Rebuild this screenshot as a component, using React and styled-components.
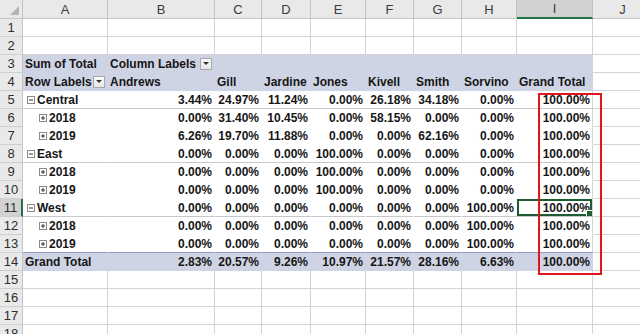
import React from 'react';
import styled, { createGlobalStyle } from 'styled-components';

const GlobalStyle = createGlobalStyle`
  body {
    margin: 0;
    overflow: hidden;
    background: #fff;
    font-family: "Liberation Sans", Arial, sans-serif;
  }
`;

const Sheet = styled.div`
  position: relative;
  width: 640px;
  height: 334px;
  overflow: hidden;
  display: grid;
  grid-template-columns: 23px 85px 107px 47px 49px 55px 48px 48px 55px 76px 60px;
  grid-template-rows: 19px;
  grid-auto-rows: 18px;
  background: #fff;
`;

const Corner = styled.div`
  position: relative;
  background: #e9e9e9;
  border-right: 1px solid #c4c4c4;
  border-bottom: 1px solid #c4c4c4;
  box-sizing: border-box;
  &::after {
    content: '';
    position: absolute;
    right: 3px;
    bottom: 3px;
    border-left: 9px solid transparent;
    border-bottom: 9px solid #b4b4b4;
  }
`;

const ColHead = styled.div`
  display: flex;
  align-items: center;
  justify-content: center;
  box-sizing: border-box;
  font-size: 13px;
  color: #3c3c3c;
  background: ${(p) => (p.$active ? '#d2d2d2' : '#e9e9e9')};
  border-right: 1px solid #c4c4c4;
  border-bottom: ${(p) => (p.$active ? '2px solid #217346' : '1px solid #c4c4c4')};
`;

const RowHead = styled.div`
  display: flex;
  align-items: center;
  justify-content: center;
  box-sizing: border-box;
  font-size: 13px;
  color: #2e2e2e;
  background: ${(p) => (p.$active ? '#d2d2d2' : '#e9e9e9')};
  border-right: ${(p) => (p.$active ? '2px solid #217346' : '1px solid #c4c4c4')};
  border-bottom: 1px solid #cfcfcf;
`;

const Cell = styled.div`
  position: relative;
  display: flex;
  align-items: center;
  justify-content: ${(p) =>
    p.$align === 'right' ? 'flex-end' : p.$align === 'split' ? 'space-between' : 'flex-start'};
  box-sizing: border-box;
  padding: 0 2px 0 2px;
  overflow: hidden;
  white-space: nowrap;
  font-size: 12px;
  font-weight: 700;
  color: #161616;
  background: ${(p) => (p.$band ? '#cfd4e5' : '#fff')};
  border-right: 1px solid ${(p) => (p.$grid || p.$edge ? '#d4d4d4' : 'transparent')};
  border-bottom: 1px solid
    ${(p) => (p.$grid ? '#d4d4d4' : p.$line === 'total' ? '#8e99bb' : p.$line ? '#c6c8ce' : 'transparent')};
  box-shadow: ${(p) => (p.$selected ? 'inset 0 0 0 2px #1e5a32' : 'none')};

  &::after {
    content: '';
    display: ${(p) => (p.$selected ? 'block' : 'none')};
    position: absolute;
    right: -1px;
    bottom: -1px;
    width: 5px;
    height: 5px;
    background: #1e5a32;
    border: 1px solid #fff;
  }
`;

const DropButton = styled.span`
  display: inline-flex;
  align-items: center;
  justify-content: center;
  width: 12px;
  height: 12px;
  box-sizing: border-box;
  border: 1px solid #a9a9a9;
  background: linear-gradient(#fafafa, #e6e6e6);
  &::before {
    content: '';
    border-left: 3px solid transparent;
    border-right: 3px solid transparent;
    border-top: 3px solid #333;
  }
`;

const Label = styled.span`
  display: inline-flex;
  align-items: center;
  gap: 2px;
  padding-left: ${(p) => (p.$indent ? '14px' : '2px')};
`;

const Highlight = styled.div`
  position: absolute;
  left: 538px;
  top: 93px;
  width: 64px;
  height: 182px;
  box-sizing: border-box;
  border: 2px solid #e3151c;
  pointer-events: none;
`;

const Toggle = ({ open }) => (
  <svg width="8" height="8" viewBox="0 0 8 8">
    <rect x="0.5" y="0.5" width="7" height="7" fill="#fff" stroke="#8a8a8a" />
    <line x1="2" y1="4" x2="6" y2="4" stroke="#333" />
    {!open && <line x1="4" y1="2" x2="4" y2="6" stroke="#333" />}
  </svg>
);

const letters = ['A', 'B', 'C', 'D', 'E', 'F', 'G', 'H', 'I', 'J'];
const names = ['Gill', 'Jardine', 'Jones', 'Kivell', 'Smith', 'Sorvino', 'Grand Total'];

const pivot = [
  { label: 'Central', region: true, v: [3.44, 24.97, 11.24, 0, 26.18, 34.18, 0, 100] },
  { label: '2018', v: [0, 31.4, 10.45, 0, 58.15, 0, 0, 100] },
  { label: '2019', v: [6.26, 19.7, 11.88, 0, 0, 62.16, 0, 100] },
  { label: 'East', region: true, v: [0, 0, 0, 100, 0, 0, 0, 100] },
  { label: '2018', v: [0, 0, 0, 100, 0, 0, 0, 100] },
  { label: '2019', v: [0, 0, 0, 100, 0, 0, 0, 100] },
  { label: 'West', region: true, v: [0, 0, 0, 0, 0, 0, 100, 100] },
  { label: '2018', v: [0, 0, 0, 0, 0, 0, 100, 100] },
  { label: '2019', v: [0, 0, 0, 0, 0, 0, 100, 100] },
];
const grandTotal = [2.83, 20.57, 9.26, 10.97, 21.57, 28.16, 6.63, 100];

const pct = (n) => `${n.toFixed(2)}%`;

function renderRow(r) {
  const cells = [];
  for (let c = 0; c < 10; c++) {
    const key = `${r}-${c}`;
    const inPivot = c < 9 && r >= 3 && r <= 14;
    if (!inPivot) {
      cells.push(<Cell key={key} $grid />);
      continue;
    }
    if (r === 3) {
      if (c === 0) cells.push(<Cell key={key} $band>Sum of Total</Cell>);
      else if (c === 1)
        cells.push(
          <Cell key={key} $band $align="split">
            Column Labels
            <DropButton />
          </Cell>
        );
      else cells.push(<Cell key={key} $band />);
      continue;
    }
    if (r === 4) {
      if (c === 0)
        cells.push(
          <Cell key={key} $band $align="split">
            Row Labels
            <DropButton />
          </Cell>
        );
      else if (c === 1) cells.push(<Cell key={key} $band>Andrews</Cell>);
      else cells.push(<Cell key={key} $band>{names[c - 2]}</Cell>);
      continue;
    }
    if (r === 14) {
      cells.push(
        <Cell key={key} $band $align={c === 0 ? 'left' : 'right'}>
          {c === 0 ? 'Grand Total' : pct(grandTotal[c - 1])}
        </Cell>
      );
      continue;
    }
    const row = pivot[r - 5];
    const line = r === 13 ? 'total' : row.region;
    if (c === 0) {
      cells.push(
        <Cell key={key} $line={line}>
          <Label $indent={!row.region}>
            <Toggle open={row.region} />
            {row.label}
          </Label>
        </Cell>
      );
    } else {
      cells.push(
        <Cell key={key} $align="right" $line={line} $edge={c === 8} $selected={r === 11 && c === 8}>
          {pct(row.v[c - 1])}
        </Cell>
      );
    }
  }
  return cells;
}

export default function App() {
  const rows = Array.from({ length: 18 }, (_, i) => i + 1);
  return (
    <>
      <GlobalStyle />
      <Sheet>
        <Corner />
        {letters.map((l) => (
          <ColHead key={l} $active={l === 'I'}>
            {l}
          </ColHead>
        ))}
        {rows.map((r) => (
          <React.Fragment key={r}>
            <RowHead $active={r === 11}>{r}</RowHead>
            {renderRow(r)}
          </React.Fragment>
        ))}
        <Highlight />
      </Sheet>
    </>
  );
}
